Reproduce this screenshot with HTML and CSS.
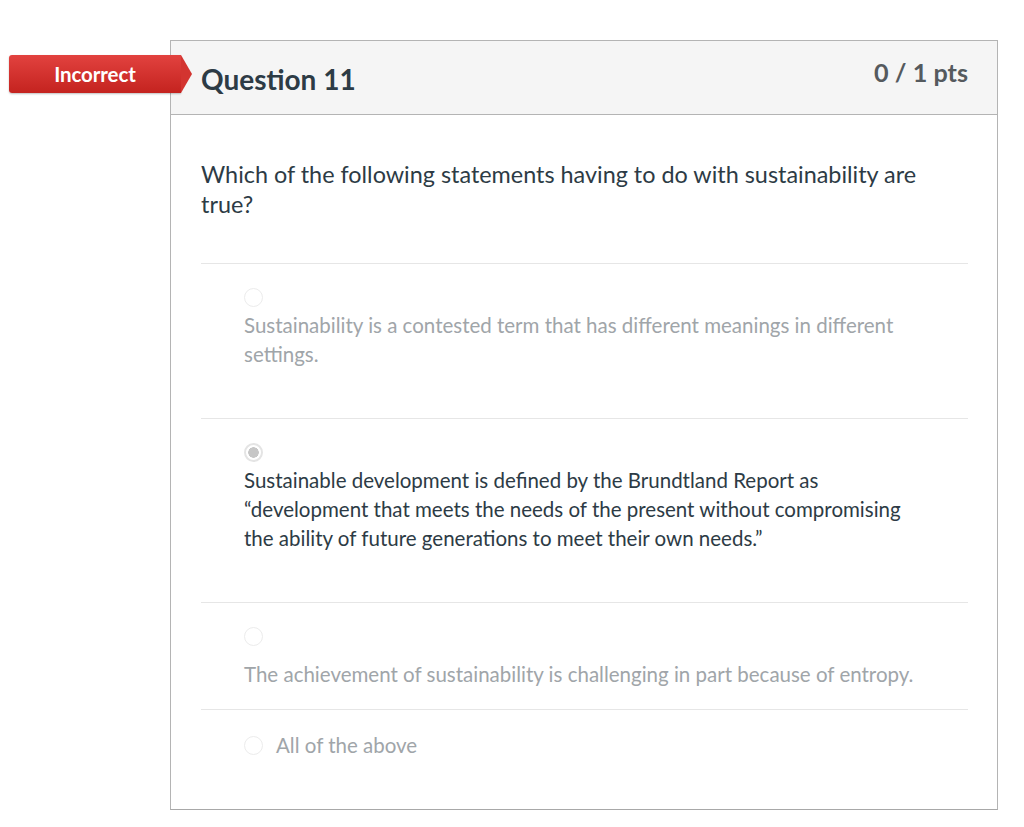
FILE: index.html
```html
<!DOCTYPE html>
<html lang="en">
<head>
<meta charset="utf-8">
<title>Question 11</title>
<link rel="stylesheet" href="styles.css">
</head>
<body>
<div class="page">
  <div class="card">
    <div class="badge">Incorrect</div>
    <div class="header">
      <h2 class="title">Question 11</h2>
      <div class="pts">0 / 1 pts</div>
    </div>
    <div class="body">
      <p class="question">Which of the following statements having to do with sustainability are true?</p>
      <div class="answer">
        <span class="radio"></span>
        <p class="text muted">Sustainability is a contested term that has different meanings in different settings.</p>
      </div>
      <div class="answer">
        <span class="radio checked"></span>
        <p class="text">Sustainable development is defined by the Brundtland Report as “development that meets the needs of the present without compromising the ability of future generations to meet their own needs.”</p>
      </div>
      <div class="answer answer-spaced">
        <span class="radio"></span>
        <p class="text muted">The achievement of sustainability is challenging in part because of entropy.</p>
      </div>
      <div class="answer answer-inline">
        <span class="radio"></span>
        <p class="text muted">All of the above</p>
      </div>
    </div>
  </div>
</div>
</body>
</html>
```

FILE: styles.css
```css
* { box-sizing: border-box; }
html, body { margin: 0; padding: 0; background: #fff; }
body {
  font-family: Lato, "Open Sans", "Liberation Sans", sans-serif;
  color: #2d3b45;
}
.page {
  padding: 40px 0 0 170px;
  width: 998px;
}
.card {
  position: relative;
  border: 1px solid #b4b4b4;
  border-bottom-color: #a8a8a8;
  height: 770px;
}
.badge {
  position: absolute;
  left: -162px;
  top: 14px;
  width: 172px;
  height: 38px;
  background: linear-gradient(#e2423f, #c4231f);
  color: #fff;
  font-weight: 700;
  font-size: 20.5px;
  line-height: 38px;
  text-align: center;
  text-indent: 0;
  letter-spacing: -0.1px;
  border-radius: 3px 0 0 3px;
  box-shadow: 0 1px 2px rgba(0,0,0,0.25);
}
.badge::after {
  content: "";
  position: absolute;
  right: -11px;
  top: 0;
  border-top: 19px solid transparent;
  border-bottom: 19px solid transparent;
  border-left: 11px solid #d33430;
}
.header {
  display: flex;
  justify-content: space-between;
  align-items: flex-start;
  height: 74px;
  background: #f5f5f5;
  border-bottom: 1px solid #b4b4b4;
  padding: 0 29px 0 30px;
}
.title {
  margin: 23px 0 0;
  font-size: 28px;
  font-weight: 700;
  line-height: 30px;
  color: #2d3b45;
}
.pts {
  margin-top: 16px;
  font-size: 25.2px;
  font-weight: 700;
  line-height: 30px;
  color: #555a5e;
}
.body {
  padding: 0 29px 0 30px;
}
.question {
  margin: 44px 0 44px;
  font-size: 23.4px;
  line-height: 30px;
}
.answer {
  border-top: 1px solid #e6e6e6;
  padding: 24px 44px 49px 43px;
}
.radio {
  display: block;
  width: 19px;
  height: 19px;
  border-radius: 50%;
  border: 1px solid #ececec;
  background: #fff;
}
.radio.checked {
  border: 2px solid #e4e4e4;
  background: radial-gradient(circle, #c6c6c6 0 5px, #fff 5.5px);
}
.text {
  margin: 4px 0 0;
  font-size: 20.5px;
  line-height: 29px;
}
.muted { color: #a0a5a9; }
.answer-spaced { padding-bottom: 20px; }
.answer-spaced .text { margin-top: 14px; }
.answer-inline {
  display: flex;
  align-items: center;
  gap: 13px;
  padding-top: 21px;
}
.answer-inline .text { margin: 0; }
```
